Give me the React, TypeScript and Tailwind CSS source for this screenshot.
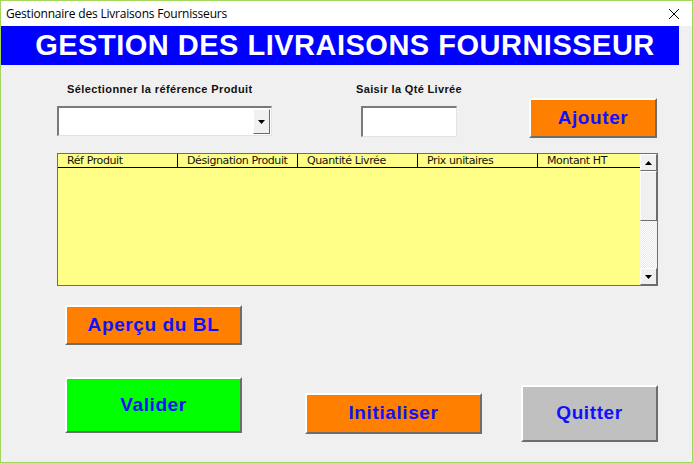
const raised =
  "border-t-2 border-l-2 border-b-2 border-r-2 border-t-white border-l-white border-b-[#6d6d6d] border-r-[#6d6d6d]"
const sunken =
  "border-t-2 border-l-2 border-b border-r border-t-[#7a7a7a] border-l-[#7a7a7a] border-b-[#e3e3e3] border-r-[#e3e3e3]"
const btnText = "font-['Liberation_Sans',sans-serif] font-bold text-[#1010ff] text-[19px] tracking-[0.6px]"

const columns = ["Réf Produit", "Désignation Produit", "Quantité Livrée", "Prix unitaires", "Montant HT"]

function Arrow({ up }: { up?: boolean }) {
  return (
    <svg width="7" height="4" viewBox="0 0 7 4">
      {up ? <path d="M0 4 L3.5 0 L7 4 Z" fill="#000" /> : <path d="M0 0 L7 0 L3.5 4 Z" fill="#000" />}
    </svg>
  )
}

function App() {
  return (
    <div className="w-[693px] h-[463px] border border-[#a3d45c] bg-[#f0f0f0] flex flex-col font-['Liberation_Sans',sans-serif] overflow-hidden">
      {/* window title */}
      <div className="h-[25px] bg-white flex items-center justify-between pl-[5px] pr-[12px]">
        <span className="text-[12px] text-black font-['Open_Sans',sans-serif] tracking-[-0.2px]">
          Gestionnaire des Livraisons Fournisseurs
        </span>
        <svg width="12" height="12" viewBox="0 0 12 12">
          <path d="M1 1 L11 11 M11 1 L1 11" stroke="#000" strokeWidth="1" />
        </svg>
      </div>

      {/* banner */}
      <div className="h-[39px] w-[678px] bg-[#0000ff] flex items-center justify-center pl-[10px]">
        <span className="text-white font-bold text-[29px] tracking-[0.5px] leading-none">
          GESTION DES LIVRAISONS FOURNISSEUR
        </span>
      </div>

      {/* saisie */}
      <div className="flex items-start pl-[56px] pt-[17px]">
        <div className="flex flex-col w-[215px]">
          <span className="pl-[10px] text-[11px] font-bold text-[#111] leading-[14px] tracking-[0.4px] whitespace-nowrap">
            Sélectionner la référence Produit
          </span>
          <div className={`mt-[10px] w-[215px] h-[30px] bg-white flex justify-end items-stretch ${sunken}`}>
            <div className="w-[17px] mr-[1px] my-[1px] bg-[#f0f0f0] border-r border-b border-[#696969] border-t border-l border-t-white border-l-white flex items-center justify-center">
              <Arrow />
            </div>
          </div>
        </div>
        <div className="flex flex-col ml-[84px] w-[110px]">
          <span className="text-[11px] font-bold text-[#111] leading-[14px] tracking-[0.35px] whitespace-nowrap">
            Saisir la Qté Livrée
          </span>
          <div className={`mt-[10px] ml-[5px] w-[96px] h-[31px] bg-white ${sunken}`} />
        </div>
        <button className={`ml-[63px] mt-[16px] w-[128px] h-[40px] bg-[#ff8000] ${raised} ${btnText}`}>
          Ajouter
        </button>
      </div>

      {/* liste */}
      <div className="ml-[56px] mt-[15px] w-[601px] h-[133px] border border-[#6d6d6d] bg-[#ffff88] flex">
        <div className="flex-1 min-w-0 overflow-hidden flex flex-col">
          <div className="flex h-[14px] border-b border-black w-[600px]">
            {columns.map((c, i) => (
              <div
                key={c}
                className={`w-[120px] shrink-0 pl-[9px] text-[11px] leading-[14px] text-[#111] font-['DejaVu_Sans',sans-serif] tracking-[-0.4px] whitespace-nowrap ${
                  i < columns.length - 1 ? "border-r border-black" : ""
                }`}
              >
                {c}
              </div>
            ))}
          </div>
        </div>
        <div className="w-[17px] shrink-0 flex flex-col bg-[#f4f4f4]">
          <div className="h-[17px] bg-[#f0f0f0] flex items-center justify-center border border-t-white border-l-white border-b-[#6d6d6d] border-r-[#6d6d6d]">
            <Arrow up />
          </div>
          <div className="h-[50px] bg-[#f0f0f0] border border-t-white border-l-white border-b-[#6d6d6d] border-r-[#6d6d6d]" />
          <div className="flex-1 bg-[repeating-conic-gradient(#ffffff_0_25%,#e8e8e8_0_50%)] bg-[length:2px_2px]" />
          <div className="h-[17px] bg-[#f0f0f0] flex items-center justify-center border border-t-white border-l-white border-b-[#6d6d6d] border-r-[#6d6d6d]">
            <Arrow />
          </div>
        </div>
      </div>

      {/* apercu */}
      <div className="ml-[64px] mt-[19px]">
        <button className={`w-[177px] h-[40px] bg-[#ff8000] ${raised} ${btnText}`}>Aperçu du BL</button>
      </div>

      {/* actions */}
      <div className="flex items-start ml-[64px] mt-[32px]">
        <button className={`w-[177px] h-[56px] bg-[#00ff00] ${raised} ${btnText}`}>Valider</button>
        <button className={`ml-[63px] mt-[16px] w-[177px] h-[41px] bg-[#ff8000] ${raised} ${btnText}`}>
          Initialiser
        </button>
        <button className={`ml-[39px] mt-[8px] w-[137px] h-[57px] bg-[#c0c0c0] ${raised} ${btnText}`}>
          Quitter
        </button>
      </div>
    </div>
  )
}

export default App
